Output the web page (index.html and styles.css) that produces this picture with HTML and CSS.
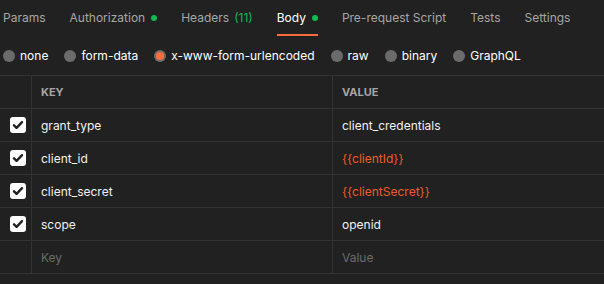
FILE: index.html
```html
<!DOCTYPE html>
<html lang="en">
<head>
    <meta charset="UTF-8">
    <title>Request Body</title>
    <link rel="stylesheet" href="styles.css">
</head>
<body>
    <div class="tabs">
        <div class="tab">Params</div>
        <div class="tab">Authorization <span class="dot"></span></div>
        <div class="tab">Headers <span class="count">(11)</span></div>
        <div class="tab active">Body <span class="dot"></span></div>
        <div class="tab">Pre-request Script</div>
        <div class="tab">Tests</div>
        <div class="tab">Settings</div>
    </div>

    <div class="body-types">
        <label class="radio"><span class="circle"></span>none</label>
        <label class="radio"><span class="circle"></span>form-data</label>
        <label class="radio"><span class="circle selected"></span>x-www-form-urlencoded</label>
        <label class="radio"><span class="circle"></span>raw</label>
        <label class="radio"><span class="circle"></span>binary</label>
        <label class="radio"><span class="circle"></span>GraphQL</label>
    </div>

    <div class="params-table">
        <div class="row head">
            <div class="cell check"></div>
            <div class="cell key">KEY</div>
            <div class="cell value">VALUE</div>
        </div>

        <div class="row">
            <div class="cell check"><span class="checkbox"><svg viewBox="0 0 16 16"><path d="M4 8.3l2.6 2.5L12 5.2" /></svg></span></div>
            <div class="cell key">grant_type</div>
            <div class="cell value">client_credentials</div>
        </div>

        <div class="row">
            <div class="cell check"><span class="checkbox"><svg viewBox="0 0 16 16"><path d="M4 8.3l2.6 2.5L12 5.2" /></svg></span></div>
            <div class="cell key">client_id</div>
            <div class="cell value variable">{{clientId}}</div>
        </div>

        <div class="row">
            <div class="cell check"><span class="checkbox"><svg viewBox="0 0 16 16"><path d="M4 8.3l2.6 2.5L12 5.2" /></svg></span></div>
            <div class="cell key">client_secret</div>
            <div class="cell value variable">{{clientSecret}}</div>
        </div>

        <div class="row">
            <div class="cell check"><span class="checkbox"><svg viewBox="0 0 16 16"><path d="M4 8.3l2.6 2.5L12 5.2" /></svg></span></div>
            <div class="cell key">scope</div>
            <div class="cell value">openid</div>
        </div>

        <div class="row">
            <div class="cell check"></div>
            <div class="cell key placeholder">Key</div>
            <div class="cell value placeholder">Value</div>
        </div>
    </div>
</body>
</html>
```

FILE: styles.css
```css
:root {
    --bg: #212121;
    --line: #333333;
    --text: #f2f2f2;
    --muted: #a6a6a6;
    --faint: #6b6b6b;
    --orange: #ff6c37;
    --variable: #f05a28;
    --green: #0cbb52;
}

* {
    margin: 0;
    padding: 0;
    box-sizing: border-box;
}

body {
    font-family: 'Inter', 'Liberation Sans', sans-serif;
    background-color: var(--bg);
    color: var(--text);
    width: 604px;
    height: 284px;
    overflow: hidden;
    white-space: nowrap;
}

.tabs {
    display: flex;
    gap: 24px;
    height: 36px;
    padding-left: 3px;
    font-size: 12px;
}

.tab {
    display: flex;
    align-items: center;
    gap: 6px;
    height: 36px;
    color: var(--muted);
    border-bottom: 2px solid transparent;
    padding-top: 1px;
}

.tab.active {
    color: #ffffff;
    border-bottom-color: var(--orange);
}

.dot {
    width: 6px;
    height: 6px;
    border-radius: 50%;
    background: var(--green);
}

.count {
    color: var(--green);
    margin-left: -1px;
}

.body-types {
    display: flex;
    align-items: center;
    gap: 16px;
    height: 39px;
    padding-left: 3px;
    font-size: 12px;
}

.radio {
    display: flex;
    align-items: center;
    gap: 5px;
    color: #ffffff;
}

.circle {
    width: 12px;
    height: 12px;
    border-radius: 50%;
    background: #6b6b6b;
    display: flex;
    align-items: center;
    justify-content: center;
}

.circle.selected::after {
    content: "";
    width: 8px;
    height: 8px;
    border-radius: 50%;
    background: var(--orange);
}

.params-table {
    border-top: 1px solid var(--line);
}

.row {
    display: grid;
    grid-template-columns: 32px 301px 1fr;
    height: 33px;
    border-bottom: 1px solid var(--line);
}

.cell {
    display: flex;
    align-items: center;
    font-size: 12px;
    padding-left: 9px;
    border-right: 1px solid var(--line);
}

.cell.value {
    border-right: none;
}

.cell.check {
    padding-left: 10px;
}

.head .cell {
    font-size: 11px;
    font-weight: 700;
    color: var(--muted);
}

.checkbox {
    width: 16px;
    height: 16px;
    border-radius: 3px;
    background: #ffffff;
    display: flex;
}

.checkbox svg {
    width: 16px;
    height: 16px;
    fill: none;
    stroke: #212121;
    stroke-width: 2.4;
    stroke-linecap: round;
    stroke-linejoin: round;
}

.variable {
    color: var(--variable);
}

.placeholder {
    color: var(--faint);
}
```
